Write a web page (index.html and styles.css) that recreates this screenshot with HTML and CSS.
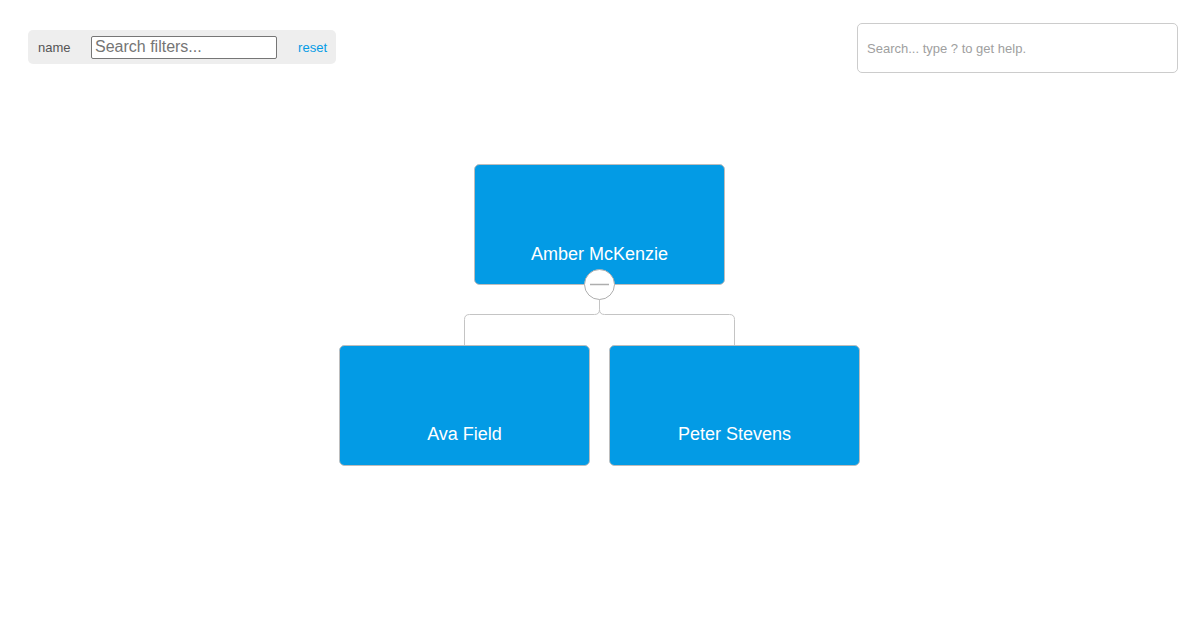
FILE: index.html
```html
<!DOCTYPE html>
<html lang="en">
<head>
<meta charset="utf-8">
<title>Org chart</title>
<link rel="stylesheet" href="styles.css">
</head>
<body>
<div class="page">
  <svg class="chart" width="1200" height="630" viewBox="0 0 1200 630" xmlns="http://www.w3.org/2000/svg">
    <g class="links">
      <path d="M599.5,299.5 L599.5,309.5 Q599.5,314.5 594.5,314.5 L469.5,314.5 Q464.5,314.5 464.5,319.5 L464.5,345"/>
      <path d="M599.5,309.5 Q599.5,314.5 604.5,314.5 L729.5,314.5 Q734.5,314.5 734.5,319.5 L734.5,345"/>
    </g>
    <g class="node">
      <rect x="474.5" y="164.5" width="250" height="120" rx="5" ry="5"/>
      <text x="599.5" y="260">Amber McKenzie</text>
    </g>
    <g class="node">
      <rect x="339.5" y="345.5" width="250" height="120" rx="5" ry="5"/>
      <text x="464.5" y="440">Ava Field</text>
    </g>
    <g class="node">
      <rect x="609.5" y="345.5" width="250" height="120" rx="5" ry="5"/>
      <text x="734.5" y="440">Peter Stevens</text>
    </g>
    <g class="collapse">
      <circle cx="599.5" cy="284.5" r="15"/>
      <line x1="590" y1="284.5" x2="609" y2="284.5"/>
    </g>
  </svg>
  <header class="toolbar">
    <div class="filter">
      <span class="filter-label">name</span>
      <input class="filter-input" type="text" placeholder="Search filters...">
      <a class="filter-reset" href="#">reset</a>
    </div>
    <div class="search">
      <input class="search-input" type="text" placeholder="Search... type ? to get help.">
    </div>
  </header>
</div>
</body>
</html>
```
FILE: styles.css
```css
html, body {
  margin: 0;
  padding: 0;
  background: #ffffff;
}
body {
  font-family: "Liberation Sans", Arial, Helvetica, sans-serif;
}
.page {
  position: relative;
  width: 1200px;
  height: 630px;
  overflow: hidden;
}
.chart {
  position: absolute;
  top: 0;
  left: 0;
}
.links path {
  fill: none;
  stroke: #c4c4c4;
  stroke-width: 1;
}
.node rect {
  fill: #039be5;
  stroke: #bdbdbd;
  stroke-width: 1;
}
.node text {
  fill: #ffffff;
  font-family: "Liberation Sans", Arial, sans-serif;
  font-size: 18px;
  text-anchor: middle;
}
.collapse circle {
  fill: #ffffff;
  stroke: #aeaeae;
  stroke-width: 1;
}
.collapse line {
  stroke: #aeaeae;
  stroke-width: 1.5;
}
.toolbar {
  position: relative;
  display: flex;
  justify-content: space-between;
  align-items: flex-start;
  padding: 23px 22px 0 28px;
}
.filter {
  margin-top: 7px;
  display: flex;
  align-items: center;
  width: 308px;
  height: 34px;
  box-sizing: border-box;
  padding: 0 9px 0 10px;
  background: #eeeeee;
  border-radius: 5px;
}
.filter-label {
  font-size: 13px;
  color: #555555;
  width: 53px;
}
.filter-input {
  width: 186px;
  height: 23px;
  box-sizing: border-box;
  margin: 0;
  padding: 0 3px;
  border: 1px solid #767676;
  border-radius: 2px;
  font-family: "Liberation Sans", Arial, sans-serif;
  font-size: 16px;
  background: #ffffff;
  color: #333333;
}
.filter-input::placeholder {
  color: #757575;
}
.filter-reset {
  margin-left: auto;
  font-size: 13px;
  color: #039be5;
  text-decoration: none;
}
.search {
  width: 321px;
  height: 50px;
}
.search-input {
  width: 100%;
  height: 100%;
  box-sizing: border-box;
  margin: 0;
  padding: 0 9px;
  border: 1px solid #cccccc;
  border-radius: 5px;
  font-family: "Liberation Sans", Arial, sans-serif;
  font-size: 13px;
  color: #333333;
  background: #ffffff;
}
.search-input::placeholder {
  color: #a0a0a0;
}
```
